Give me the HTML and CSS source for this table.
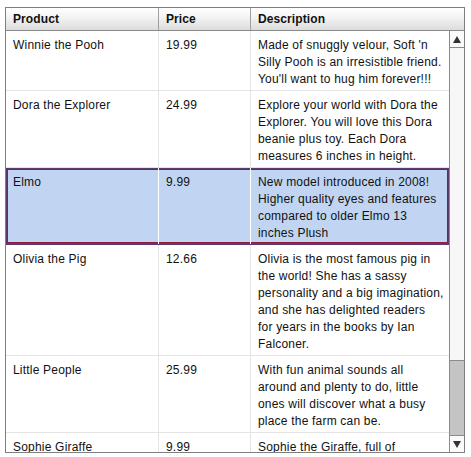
FILE: index.html
```html
<!DOCTYPE html>
<html>
<head>
<meta charset="utf-8">
<link rel="stylesheet" href="styles.css">
</head>
<body>
<div class="grid">
  <div class="head">
    <div class="hcell">Product</div>
    <div class="hcell">Price</div>
    <div class="hcell last">Description</div>
  </div>
  <div class="body">
    <div class="rows">
      <div class="row">
        <div class="cell">Winnie the Pooh</div>
        <div class="cell">19.99</div>
        <div class="cell desc">Made of snuggly velour, Soft 'n<br>Silly Pooh is an irresistible friend.<br>You'll want to hug him forever!!!</div>
      </div>
      <div class="row">
        <div class="cell">Dora the Explorer</div>
        <div class="cell">24.99</div>
        <div class="cell desc">Explore your world with Dora the<br>Explorer. You will love this Dora<br>beanie plus toy. Each Dora<br>measures 6 inches in height.</div>
      </div>
      <div class="row selected">
        <div class="cell">Elmo</div>
        <div class="cell">9.99</div>
        <div class="cell desc">New model introduced in 2008!<br>Higher quality eyes and features<br>compared to older Elmo 13<br>inches Plush</div>
      </div>
      <div class="row">
        <div class="cell">Olivia the Pig</div>
        <div class="cell">12.66</div>
        <div class="cell desc">Olivia is the most famous pig in<br>the world! She has a sassy<br>personality and a big imagination,<br>and she has delighted readers<br>for years in the books by Ian<br>Falconer.</div>
      </div>
      <div class="row">
        <div class="cell">Little People</div>
        <div class="cell">25.99</div>
        <div class="cell desc">With fun animal sounds all<br>around and plenty to do, little<br>ones will discover what a busy<br>place the farm can be.</div>
      </div>
      <div class="row">
        <div class="cell">Sophie Giraffe</div>
        <div class="cell">9.99</div>
        <div class="cell desc">Sophie the Giraffe, full of<br>surprises, is a favorite teething<br>toy for babies everywhere.</div>
      </div>
    </div>
    <div class="scrollbar">
      <div class="sbtn"><span class="arrow up"></span></div>
      <div class="track">
        <div class="thumb"></div>
      </div>
      <div class="sbtn down"><span class="arrow dn"></span></div>
    </div>
  </div>
</div>
</body>
</html>
```

FILE: styles.css
```css
html, body {
  margin: 0;
  padding: 0;
  background: #fff;
}
body {
  padding: 7px 0 0 5px;
  font-family: "Liberation Sans", Arial, sans-serif;
  font-size: 12px;
  color: #111;
}
.grid {
  width: 458px;
  height: 444px;
  border: 1px solid #7f7f7f;
  display: flex;
  flex-direction: column;
  overflow: hidden;
}
.head {
  display: grid;
  grid-template-columns: 153px 92px 1fr;
  height: 22px;
  border-bottom: 1px solid #8a8a8a;
  background: linear-gradient(#ffffff, #f4f4f4 40%, #dcdcdc);
  flex: none;
}
.hcell {
  font-weight: bold;
  line-height: 22px;
  padding-left: 7px;
  border-right: 1px solid #a0a0a0;
  letter-spacing: 0.1px;
}
.hcell.last {
  border-right: none;
}
.body {
  flex: 1;
  display: flex;
  min-height: 0;
}
.rows {
  flex: 1;
  overflow: hidden;
}
.row {
  display: grid;
  grid-template-columns: 153px 92px 1fr;
  border-bottom: 1px solid #e4e4e4;
}
.cell {
  padding: 6px 7px 2px;
  line-height: 17px;
  letter-spacing: 0.2px;
  border-right: 1px solid #e4e4e4;
}
.cell.desc {
  border-right: none;
  padding-right: 0;
  white-space: nowrap;
  overflow: hidden;
}
.row.selected {
  background: #c1d5f2;
  box-shadow: inset 0 0 0 1px #5e3a72, inset 0 0 0 2px #8e1c40;
  border-bottom-color: #5e3a72;
}
.row.selected .cell {
  border-right-color: #ffffff;
}
.row.selected .cell.desc {
  border-right: none;
}
.scrollbar {
  width: 14px;
  border-left: 1px solid #8a8a8a;
  display: flex;
  flex-direction: column;
  background: #f7f7f7;
  flex: none;
}
.sbtn {
  height: 16px;
  border-bottom: 1px solid #8a8a8a;
  display: flex;
  align-items: center;
  justify-content: center;
  background: #fafafa;
  flex: none;
}
.sbtn.down {
  border-bottom: none;
  border-top: 1px solid #8a8a8a;
}
.arrow {
  width: 0;
  height: 0;
  border-left: 4px solid transparent;
  border-right: 4px solid transparent;
}
.arrow.up {
  border-bottom: 7px solid #333;
}
.arrow.dn {
  border-top: 7px solid #333;
}
.track {
  flex: 1;
  display: flex;
  flex-direction: column;
  justify-content: flex-end;
  background: #f7f7f7;
}
.thumb {
  height: 74px;
  background: #c4c4c4;
  border-top: 1px solid #8a8a8a;
}
```
